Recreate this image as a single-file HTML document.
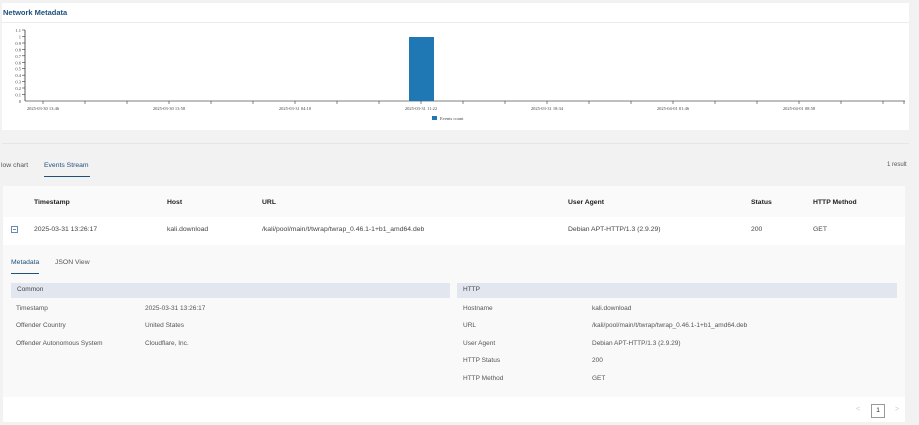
<!DOCTYPE html>
<html><head><meta charset="utf-8"><style>
*{margin:0;padding:0;box-sizing:border-box}
body{width:919px;height:425px;background:#f2f2f2;font-family:"Liberation Sans",sans-serif;font-size:6.5px;color:#333;position:relative;overflow:hidden}
.abs{position:absolute}
.top{left:2px;top:3px;width:907px;height:127px;background:#fff}
.title{left:3px;top:8px;font-size:7.5px;font-weight:bold;color:#1f4f7a}
.hl{left:2px;top:22px;width:907px;height:1px;background:#ececec}
.tbl{left:3px;top:186px;width:902px;height:236px;background:#fff}
.th{font-weight:bold;color:#222;top:199px;font-size:6.8px}
.td{top:226px;font-size:6.8px;color:#444}
.det{left:3px;top:245px;width:902px;height:152px;background:#f9f9f9}
.bar{height:15px;background:#e2e7ef;top:283px;padding:3px 6px;color:#444}
.k,.v{color:#555}
</style></head><body>
<div class="abs top"></div>
<div class="abs title">Network Metadata</div>
<div class="abs hl"></div>
<svg class="abs" style="left:0;top:0" width="919" height="130" font-family="Liberation Serif" font-size="4.5" fill="#444">
<line x1="25" y1="30" x2="25" y2="101" stroke="#333" stroke-width="0.8"/>
<line x1="25" y1="101" x2="905" y2="101" stroke="#555" stroke-width="0.8"/>
<g stroke="#333" stroke-width="0.6">
<line x1="22" y1="30" x2="25" y2="30"/><line x1="22" y1="36.5" x2="25" y2="36.5"/><line x1="22" y1="43" x2="25" y2="43"/><line x1="22" y1="49.4" x2="25" y2="49.4"/><line x1="22" y1="55.8" x2="25" y2="55.8"/><line x1="22" y1="62.3" x2="25" y2="62.3"/><line x1="22" y1="68.7" x2="25" y2="68.7"/><line x1="22" y1="75.2" x2="25" y2="75.2"/><line x1="22" y1="81.6" x2="25" y2="81.6"/><line x1="22" y1="88" x2="25" y2="88"/><line x1="22" y1="94.5" x2="25" y2="94.5"/>
<line x1="43" y1="101" x2="43" y2="104"/><line x1="85" y1="101" x2="85" y2="104"/><line x1="127" y1="101" x2="127" y2="104"/><line x1="169" y1="101" x2="169" y2="104"/><line x1="211" y1="101" x2="211" y2="104"/><line x1="253" y1="101" x2="253" y2="104"/><line x1="295" y1="101" x2="295" y2="104"/><line x1="337" y1="101" x2="337" y2="104"/><line x1="379" y1="101" x2="379" y2="104"/><line x1="421" y1="101" x2="421" y2="104"/><line x1="463" y1="101" x2="463" y2="104"/><line x1="505" y1="101" x2="505" y2="104"/><line x1="547" y1="101" x2="547" y2="104"/><line x1="589" y1="101" x2="589" y2="104"/><line x1="631" y1="101" x2="631" y2="104"/><line x1="673" y1="101" x2="673" y2="104"/><line x1="715" y1="101" x2="715" y2="104"/><line x1="757" y1="101" x2="757" y2="104"/><line x1="799" y1="101" x2="799" y2="104"/><line x1="841" y1="101" x2="841" y2="104"/><line x1="883" y1="101" x2="883" y2="104"/><line x1="904" y1="101" x2="904" y2="104"/>
</g>
<g text-anchor="end"><text x="21" y="32">1.1</text><text x="21" y="38.5">1</text><text x="21" y="45">0.9</text><text x="21" y="51.4">0.8</text><text x="21" y="57.8">0.7</text><text x="21" y="64.3">0.6</text><text x="21" y="70.7">0.5</text><text x="21" y="77.2">0.4</text><text x="21" y="83.6">0.3</text><text x="21" y="90">0.2</text><text x="21" y="96.5">0.1</text><text x="21" y="103">0</text></g>
<g text-anchor="middle"><text x="43" y="110">2025-03-30 13:46</text><text x="169" y="110">2025-03-30 13:58</text><text x="295" y="110">2025-03-31 04:10</text><text x="421" y="110">2025-03-31 11:22</text><text x="547" y="110">2025-03-31 18:34</text><text x="673" y="110">2025-04-01 01:46</text><text x="799" y="110">2025-04-01 08:58</text></g>
<rect x="409" y="37" width="25" height="64" fill="#1f77b4"/>
<rect x="432" y="116" width="5" height="4" fill="#1f77b4"/>
<text x="440" y="120">Events count</text>
</svg>
<div class="abs" style="left:2px;top:143px;width:907px;height:1px;background:#e6e6e6"></div>
<div class="abs" style="left:1px;top:162px;font-size:6.8px;color:#555">low chart</div>
<div class="abs" style="left:44px;top:162px;font-size:6.8px;color:#1f4f7a">Events Stream</div>
<div class="abs" style="left:44px;top:176px;width:46px;height:1px;background:#1f4f7a"></div>
<div class="abs" style="left:887px;top:162px;font-size:6px;color:#555">1 result</div>
<div class="abs tbl"></div>
<div class="abs" style="left:3px;top:186px;width:902px;height:31px;background:#fafafa"></div>
<div class="abs th" style="left:34px">Timestamp</div>
<div class="abs th" style="left:167px">Host</div>
<div class="abs th" style="left:262px">URL</div>
<div class="abs th" style="left:568px">User Agent</div>
<div class="abs th" style="left:751px">Status</div>
<div class="abs th" style="left:813px">HTTP Method</div>
<div class="abs" style="left:11px;top:226px;width:7px;height:7px;border:1px solid #6a8bb0;"><div style="margin:2px 1px;height:1px;background:#6a8bb0"></div></div>
<div class="abs td" style="left:34px">2025-03-31 13:26:17</div>
<div class="abs td" style="left:167px">kali.download</div>
<div class="abs td" style="left:262px">/kali/pool/main/t/twrap/twrap_0.46.1-1+b1_amd64.deb</div>
<div class="abs td" style="left:568px">Debian APT-HTTP/1.3 (2.9.29)</div>
<div class="abs td" style="left:751px">200</div>
<div class="abs td" style="left:813px">GET</div>
<div class="abs det"></div>
<div class="abs" style="left:11px;top:259px;font-size:6.8px;color:#1f4f7a">Metadata</div>
<div class="abs" style="left:11px;top:273px;width:28px;height:1px;background:#1f4f7a"></div>
<div class="abs" style="left:55px;top:259px;font-size:6.8px;color:#555">JSON View</div>
<div class="abs bar" style="left:11px;width:439px">Common</div>
<div class="abs bar" style="left:457px;width:440px">HTTP</div>
<div class="abs k" style="left:16px;top:305px">Timestamp</div><div class="abs v" style="left:145px;top:305px">2025-03-31 13:26:17</div>
<div class="abs k" style="left:16px;top:322px">Offender Country</div><div class="abs v" style="left:145px;top:322px">United States</div>
<div class="abs k" style="left:16px;top:340px">Offender Autonomous System</div><div class="abs v" style="left:145px;top:340px">Cloudflare, Inc.</div>
<div class="abs k" style="left:463px;top:305px">Hostname</div><div class="abs v" style="left:592px;top:305px">kali.download</div>
<div class="abs k" style="left:463px;top:322px">URL</div><div class="abs v" style="left:592px;top:322px">/kali/pool/main/t/twrap/twrap_0.46.1-1+b1_amd64.deb</div>
<div class="abs k" style="left:463px;top:340px">User Agent</div><div class="abs v" style="left:592px;top:340px">Debian APT-HTTP/1.3 (2.9.29)</div>
<div class="abs k" style="left:463px;top:357px">HTTP Status</div><div class="abs v" style="left:592px;top:357px">200</div>
<div class="abs k" style="left:463px;top:375px">HTTP Method</div><div class="abs v" style="left:592px;top:375px">GET</div>
<div class="abs" style="left:856px;top:406px;color:#ccc;font-size:7px">&lt;</div>
<div class="abs" style="left:871px;top:404px;width:14px;height:14px;border:1px solid #999;text-align:center;line-height:12px;font-size:6.5px;color:#222">1</div>
<div class="abs" style="left:895px;top:406px;color:#ccc;font-size:7px">&gt;</div>
</body></html>
